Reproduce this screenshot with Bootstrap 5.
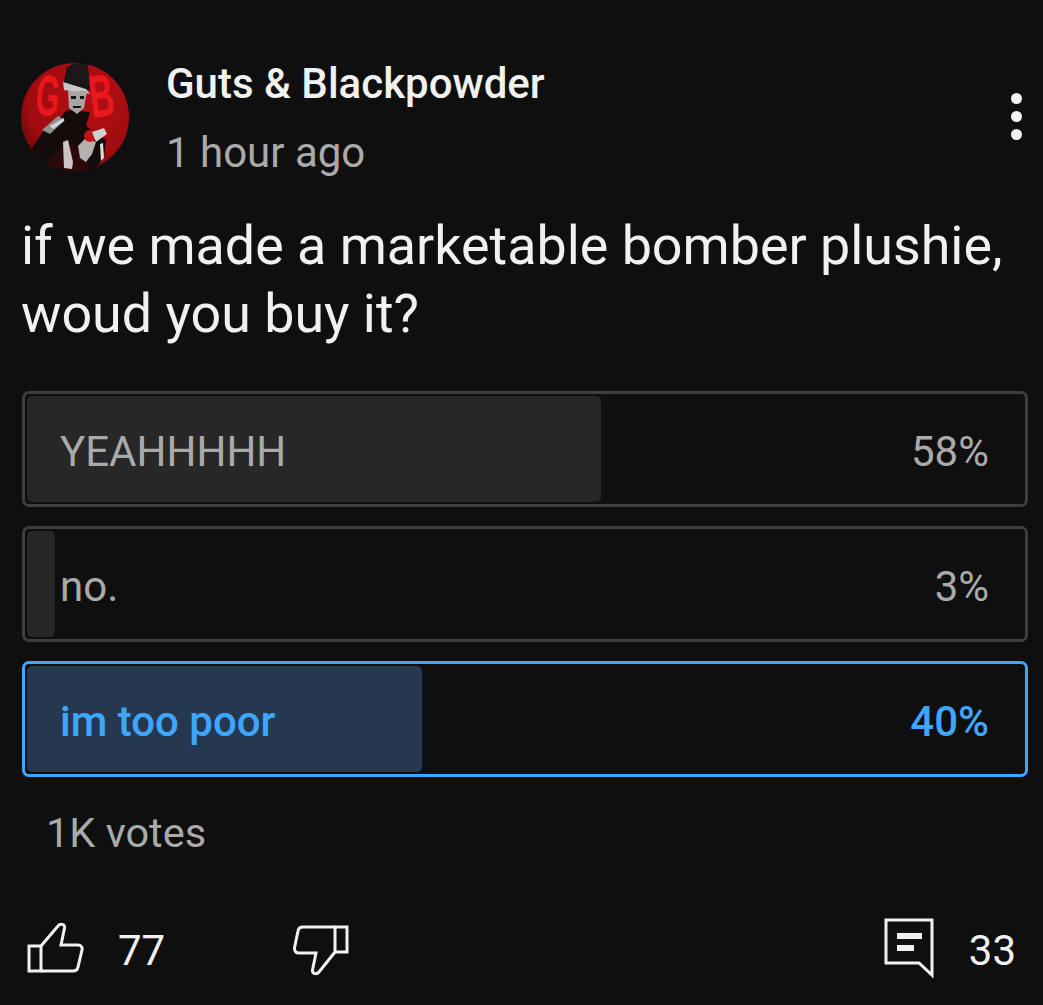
<!DOCTYPE html>
<html lang="en">
<head>
    <meta charset="UTF-8">
    <meta name="viewport" content="width=device-width, initial-scale=1.0">
    <title>Poll post</title>
    <link rel="stylesheet" href="https://cdn.jsdelivr.net/npm/bootstrap@5.3.0/dist/css/bootstrap.min.css">
    <style>
        html, body { height: 100%; }
        body { background: #0f0f0f; color: #f1f1f1; font-family: Roboto, "Liberation Sans", sans-serif; overflow: hidden; }
        .post-wrap { padding: 62px 15px 0 22px; height: 1005px; }
        .avatar-svg { width: 110px; height: 110px; margin-left: -2px; flex: none; }
        .post-head { height: 110px; }
        .author-box { margin-left: 36px; }
        .author-name { font-size: 42px; font-weight: 500; line-height: 44px; color: #f1f1f1; }
        .post-time { font-size: 42px; line-height: 44px; margin-top: 25px; color: #aaa; }
        .dots-box { width: 11px; gap: 7px; margin: 31px 6px 0 0; }
        .dots-box span { width: 11px; height: 11px; border-radius: 50%; background: #f1f1f1; }
        .post-title { font-size: 53.8px; line-height: 68px; margin: 40px 0 43px -1px; color: #f1f1f1; }
        .poll-list { gap: 19px; width: 1006px; }
        .poll-row { height: 116px; border: 3px solid #3f3f3f; border-radius: 7px; padding: 2px; }
        .poll-fill { background: #272727; border-radius: 5px; height: 100%; }
        .poll-label { font-size: 42px; color: #aaa; padding: 4px 36px 0 35px; z-index: 1; }
        .poll-row.chosen { border-color: #3ea6ff; }
        .poll-row.chosen .poll-fill { background: #263850; }
        .poll-row.chosen .poll-label { color: #3ea6ff; font-weight: 500; }
        .vote-count { font-size: 41.5px; line-height: 44px; color: #aaa; margin: 34px 0 0 24px; }
        .action-bar { margin-top: 63px; height: 60px; padding-right: 12px; }
        .action-num { font-size: 42px; color: #f1f1f1; line-height: 60px; padding-top: 6px; }
        .like-icon { width: 60px; height: 56px; margin-left: 4px; }
        .like-count { margin-left: 32px; }
        .dislike-icon { width: 60px; height: 56px; margin: 4px 0 0 126px; }
        .comment-icon { width: 52px; height: 62px; margin-right: 34px; }
    </style>
</head>
<body>
    <div class="post-wrap">
        <div class="post-head d-flex align-items-start">
            <svg class="avatar-svg" viewBox="0 0 110 110">
                <defs>
                    <clipPath id="av"><circle cx="55" cy="55" r="54"/></clipPath>
                    <radialGradient id="avbg" cx="0.6" cy="0.35" r="0.75">
                        <stop offset="0" stop-color="#b50f13"/>
                        <stop offset="0.7" stop-color="#a00c10"/>
                        <stop offset="1" stop-color="#5c0709"/>
                    </radialGradient>
                </defs>
                <circle cx="55" cy="55" r="54" fill="url(#avbg)"/>
                <text font-family="Liberation Sans, sans-serif" font-size="38" font-weight="700" fill="#e8181c" transform="translate(14 52) rotate(6) scale(.8 1.5)">G</text>
                <text font-family="Liberation Sans, sans-serif" font-size="40" font-weight="700" fill="#e8181c" transform="translate(72 56) rotate(-8) scale(.85 1.5)">B</text>
                <g clip-path="url(#av)">
                    <!-- figure -->
                    <path d="M12 86 24 68 42 54 46 48 70 50 66 64 86 78 84 96 72 110H22Z" fill="#140b0b"/>
                    <path d="M24 110 30 96 44 84 66 82 70 110Z" fill="#2a0a0b"/>
                    <path d="M43 24 47 5 57 0 68 2 70 28Z" fill="#1d1616"/>
                    <path d="M43 20 66 27 70 32 44 28Z" fill="#c8c6c6"/>
                    <path d="M48 29H67L64 46 57 52 49 46Z" fill="#a9a5a5"/>
                    <path d="M51 34h5v3h-5ZM60 34h4v3h-4ZM53 44h8v2h-8Z" fill="#1b1010"/>
                    <path d="M22 68 38 54 45 58 30 72Z" fill="#8f8f8f"/>
                    <path d="M30 64 44 56 44 59 33 67Z" fill="#d5d5d5"/>
                    <path d="M43 80 48 78 53 100 52 107 44 106Z" fill="#c9c5c5"/>
                    <path d="M58 84 66 76 76 80 72 92 66 100 60 96Z" fill="#b5b1b1"/>
                    <circle cx="70" cy="74" r="6" fill="#c21416"/>
                    <path d="M72 70 84 66 87 72 76 80Z" fill="#cfcfcf"/>
                    <path d="M80 82l3-1 1 15-3 3Z" fill="#dcdcdc"/>
                </g>
            </svg>
            <div class="author-box flex-grow-1">
                <div class="author-name">Guts &amp; Blackpowder</div>
                <div class="post-time">1 hour ago</div>
            </div>
            <div class="dots-box d-flex flex-column">
                <span></span><span></span><span></span>
            </div>
        </div>

        <div class="post-title">if we made a marketable bomber plushie,<br>woud you buy it?</div>

        <div class="poll-list d-flex flex-column">
            <div class="poll-row position-relative">
                <div class="poll-fill" style="width: 57.6%"></div>
                <div class="poll-label position-absolute top-0 bottom-0 start-0 end-0 d-flex justify-content-between align-items-center"><span>YEAHHHHH</span><span>58%</span></div>
            </div>
            <div class="poll-row position-relative">
                <div class="poll-fill" style="width: 2.8%"></div>
                <div class="poll-label position-absolute top-0 bottom-0 start-0 end-0 d-flex justify-content-between align-items-center"><span>no.</span><span>3%</span></div>
            </div>
            <div class="poll-row chosen position-relative">
                <div class="poll-fill" style="width: 39.7%"></div>
                <div class="poll-label position-absolute top-0 bottom-0 start-0 end-0 d-flex justify-content-between align-items-center"><span>im too poor</span><span>40%</span></div>
            </div>
        </div>

        <div class="vote-count">1K votes</div>

        <div class="action-bar d-flex align-items-center">
            <svg class="like-icon" viewBox="0 0 60 56" fill="none" stroke="#f1f1f1" stroke-width="3">
                <path d="M3 26H15V51H3Z"/>
                <path d="M15 26 32 6C34 3.500 39 3.500 38.500 8L35 25H52C55 25 56.500 27 56 30L52 47C51.500 50 50 51 47 51H15"/>
            </svg>
            <span class="action-num like-count">77</span>
            <svg class="dislike-icon" viewBox="0 0 60 56" fill="none" stroke="#f1f1f1" stroke-width="3">
                <path d="M56 5H44V30H56Z"/>
                <path d="M44 30 28 50C26 52.500 21 52.500 21.500 48L25 31H8C5 31 3 29 3.500 26L7 9C7.500 6 9 5 12 5H44"/>
            </svg>
            <div class="flex-grow-1"></div>
            <svg class="comment-icon" viewBox="0 0 52 62" fill="none" stroke="#f1f1f1" stroke-width="3">
                <path d="M3 3H49V58L36 46H3Z"/>
                <path d="M14 19H39" stroke-width="6"/>
                <path d="M14 31H31" stroke-width="6"/>
            </svg>
            <span class="action-num">33</span>
        </div>
    </div>
    <script src="https://cdn.jsdelivr.net/npm/bootstrap@5.3.0/dist/js/bootstrap.bundle.min.js"></script>
</body>
</html>
